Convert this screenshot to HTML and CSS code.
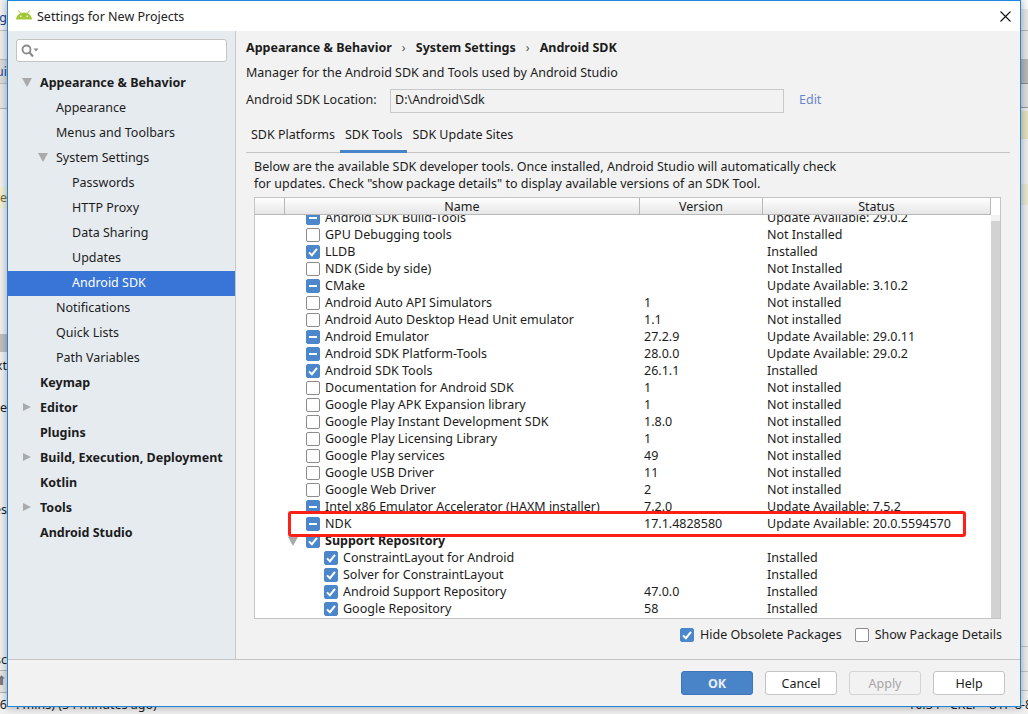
FILE: index.html
```html
<!DOCTYPE html>
<html lang="en">
<head>
    <meta charset="UTF-8">
    <title>Settings for New Projects</title>
    <link rel="stylesheet" href="styles.css">
</head>
<body>
    <svg class="defs" width="0" height="0">
        <symbol id="tick" viewBox="0 0 14 14">
            <path d="M3 7.4 5.9 10.2 11 3.8" fill="none" stroke="#fff" stroke-width="2"/>
        </symbol>
    </svg>

    <!-- scraps of the IDE behind the dialog -->
    <div class="strip strip-left">
        <span class="scrap scrap-g">g</span>
        <span class="scrap scrap-ui">ui</span>
        <span class="scrap scrap-ve">ve</span>
        <span class="scrap scrap-xt">xt</span>
        <span class="scrap scrap-le">le</span>
        <span class="scrap scrap-es">es</span>
        <span class="scrap scrap-sc">sc</span>
        <span class="scrap scrap-up">⬆</span>
        <span class="scrap scrap-6">6</span>
    </div>
    <div class="strip strip-right">
        <span class="scrap scrap-8">-8</span>
    </div>
    <div class="under-text under-left">: mins) (34 minutes ago)</div>
    <div class="under-text under-right">16:34 &nbsp; CRLF &nbsp; UTF-8</div>

    <div class="window">
        <div class="titlebar">
            <svg class="droid" width="16" height="10" viewBox="0 0 16 10">
                <path d="M0 9.5C.3 5.5 3.5 2.5 8 2.5s7.7 3 8 7z" fill="#a4c639"/>
                <path d="M2.5 .5 5 4M13.5 .5 11 4" stroke="#a4c639" stroke-width="1"/>
                <circle cx="4.8" cy="6.3" r=".8" fill="#fff"/>
                <circle cx="11.2" cy="6.3" r=".8" fill="#fff"/>
            </svg>
            <span class="title">Settings for New Projects</span>
            <svg class="close" width="11" height="11" viewBox="0 0 11 11">
                <path d="M.5 .5 10.5 10.5M10.5 .5 .5 10.5" stroke="#111" stroke-width="1.1"/>
            </svg>
        </div>

        <div class="main">
            <div class="sidebar">
                <div class="search">
                    <svg width="18" height="14" viewBox="0 0 18 14">
                        <circle cx="5.5" cy="5.5" r="4" fill="none" stroke="#8a8a8a" stroke-width="1.8"/>
                        <path d="M8.5 8.5 12 12.5" stroke="#8a8a8a" stroke-width="2.2"/>
                        <path d="M12.5 4.5h5l-2.5 3z" fill="#8a8a8a"/>
                    </svg>
                </div>
                <ul class="tree">
                    <li class="node top"><span class="tw tw-down"></span>Appearance &amp; Behavior</li>
                    <li class="node sub">Appearance</li>
                    <li class="node sub">Menus and Toolbars</li>
                    <li class="node sub-open"><span class="tw tw-down"></span>System Settings</li>
                    <li class="node leaf">Passwords</li>
                    <li class="node leaf">HTTP Proxy</li>
                    <li class="node leaf">Data Sharing</li>
                    <li class="node leaf">Updates</li>
                    <li class="node leaf selected">Android SDK</li>
                    <li class="node sub">Notifications</li>
                    <li class="node sub">Quick Lists</li>
                    <li class="node sub">Path Variables</li>
                    <li class="node top"><span class="tw"></span>Keymap</li>
                    <li class="node top"><span class="tw tw-right"></span>Editor</li>
                    <li class="node top"><span class="tw"></span>Plugins</li>
                    <li class="node top"><span class="tw tw-right"></span>Build, Execution, Deployment</li>
                    <li class="node top"><span class="tw"></span>Kotlin</li>
                    <li class="node top"><span class="tw tw-right"></span>Tools</li>
                    <li class="node top"><span class="tw"></span>Android Studio</li>
                </ul>
            </div>

            <div class="pane">
                <div class="crumbs">
                    <span>Appearance &amp; Behavior</span><i>›</i><span>System Settings</span><i>›</i><span>Android SDK</span>
                </div>
                <div class="desc">Manager for the Android SDK and Tools used by Android Studio</div>
                <div class="location">
                    <label>Android SDK Location:</label>
                    <div class="field">D:\Android\Sdk</div>
                    <a class="edit">Edit</a>
                </div>
                <div class="tabs">
                    <div class="tab">SDK Platforms</div>
                    <div class="tab active">SDK Tools</div>
                    <div class="tab">SDK Update Sites</div>
                </div>
                <p class="intro">Below are the available SDK developer tools. Once installed, Android Studio will automatically check<br>for updates. Check "show package details" to display available versions of an SDK Tool.</p>

                <div class="table">
                    <div class="thead">
                        <div class="th th-tree"></div>
                        <div class="th th-name">Name</div>
                        <div class="th th-ver">Version</div>
                        <div class="th th-status">Status</div>
                    </div>
                    <div class="tbody">
                        <div class="rows">
                            <div class="row first"><div class="name"><span class="cb part"></span>Android SDK Build-Tools</div><div class="ver"></div><div class="status">Update Available: 29.0.2</div></div>
                            <div class="row"><div class="name"><span class="cb"></span>GPU Debugging tools</div><div class="ver"></div><div class="status">Not Installed</div></div>
                            <div class="row"><div class="name"><span class="cb on"><svg><use href="#tick"/></svg></span>LLDB</div><div class="ver"></div><div class="status">Installed</div></div>
                            <div class="row"><div class="name"><span class="cb"></span>NDK (Side by side)</div><div class="ver"></div><div class="status">Not Installed</div></div>
                            <div class="row"><div class="name"><span class="cb part"></span>CMake</div><div class="ver"></div><div class="status">Update Available: 3.10.2</div></div>
                            <div class="row"><div class="name"><span class="cb"></span>Android Auto API Simulators</div><div class="ver">1</div><div class="status">Not installed</div></div>
                            <div class="row"><div class="name"><span class="cb"></span>Android Auto Desktop Head Unit emulator</div><div class="ver">1.1</div><div class="status">Not installed</div></div>
                            <div class="row"><div class="name"><span class="cb part"></span>Android Emulator</div><div class="ver">27.2.9</div><div class="status">Update Available: 29.0.11</div></div>
                            <div class="row"><div class="name"><span class="cb part"></span>Android SDK Platform-Tools</div><div class="ver">28.0.0</div><div class="status">Update Available: 29.0.2</div></div>
                            <div class="row"><div class="name"><span class="cb on"><svg><use href="#tick"/></svg></span>Android SDK Tools</div><div class="ver">26.1.1</div><div class="status">Installed</div></div>
                            <div class="row"><div class="name"><span class="cb"></span>Documentation for Android SDK</div><div class="ver">1</div><div class="status">Not installed</div></div>
                            <div class="row"><div class="name"><span class="cb"></span>Google Play APK Expansion library</div><div class="ver">1</div><div class="status">Not installed</div></div>
                            <div class="row"><div class="name"><span class="cb"></span>Google Play Instant Development SDK</div><div class="ver">1.8.0</div><div class="status">Not installed</div></div>
                            <div class="row"><div class="name"><span class="cb"></span>Google Play Licensing Library</div><div class="ver">1</div><div class="status">Not installed</div></div>
                            <div class="row"><div class="name"><span class="cb"></span>Google Play services</div><div class="ver">49</div><div class="status">Not installed</div></div>
                            <div class="row"><div class="name"><span class="cb"></span>Google USB Driver</div><div class="ver">11</div><div class="status">Not installed</div></div>
                            <div class="row"><div class="name"><span class="cb"></span>Google Web Driver</div><div class="ver">2</div><div class="status">Not installed</div></div>
                            <div class="row"><div class="name"><span class="cb part"></span>Intel x86 Emulator Accelerator (HAXM installer)</div><div class="ver">7.2.0</div><div class="status">Update Available: 7.5.2</div></div>
                            <div class="row"><div class="name"><span class="cb part"></span>NDK</div><div class="ver">17.1.4828580</div><div class="status">Update Available: 20.0.5594570</div></div>
                            <div class="row group"><div class="name"><span class="tw tw-down"></span><span class="cb on"><svg><use href="#tick"/></svg></span>Support Repository</div><div class="ver"></div><div class="status"></div></div>
                            <div class="row child"><div class="name"><span class="cb on"><svg><use href="#tick"/></svg></span>ConstraintLayout for Android</div><div class="ver"></div><div class="status">Installed</div></div>
                            <div class="row child"><div class="name"><span class="cb on"><svg><use href="#tick"/></svg></span>Solver for ConstraintLayout</div><div class="ver"></div><div class="status">Installed</div></div>
                            <div class="row child"><div class="name"><span class="cb on"><svg><use href="#tick"/></svg></span>Android Support Repository</div><div class="ver">47.0.0</div><div class="status">Installed</div></div>
                            <div class="row child"><div class="name"><span class="cb on"><svg><use href="#tick"/></svg></span>Google Repository</div><div class="ver">58</div><div class="status">Installed</div></div>
                        </div>
                        <div class="scrollbar"><div class="thumb"></div></div>
                    </div>
                    <div class="highlight"></div>
                </div>

                <div class="options">
                    <div class="option"><span class="cb on"><svg><use href="#tick"/></svg></span>Hide Obsolete Packages</div>
                    <div class="option"><span class="cb"></span>Show Package Details</div>
                </div>
            </div>
        </div>

        <div class="footer">
            <button class="btn primary">OK</button>
            <button class="btn">Cancel</button>
            <button class="btn disabled">Apply</button>
            <button class="btn">Help</button>
        </div>
    </div>
</body>
</html>
```

FILE: styles.css
```css
* {
    margin: 0;
    padding: 0;
    box-sizing: border-box;
}

body {
    width: 1028px;
    height: 714px;
    overflow: hidden;
    position: relative;
    background: #f0f0f0;
    font-family: "Noto Sans", "Open Sans", sans-serif;
    font-size: 12.5px;
    color: #1c1c1c;
}

.defs {
    position: absolute;
}

/* backdrop */
.strip {
    position: absolute;
    top: 0;
    height: 714px;
    overflow: hidden;
}

.strip-left {
    left: 0;
    width: 7px;
    background: linear-gradient(to bottom,
        #f2f2f2 0 30px, #bdbdbd 30px 31px, #ededed 31px 59px, #bdbdbd 59px 60px,
        #dcdcdc 60px 83px, #bdbdbd 83px 84px, #e6e6e6 84px 108px, #b5b5b5 108px 109px,
        #f0f0f0 109px 187px, #f3f0d8 187px 208px, #f0f0f0 208px 334px, #bfbfbf 334px 352px,
        #f0f0f0 352px 670px, #b5b5b5 670px 671px, #e6e6e6 671px 692px, #b5b5b5 692px 693px,
        #f0f0f0 693px 714px);
}

.strip-right {
    left: 1021px;
    width: 7px;
    background: linear-gradient(to bottom,
        #fafafa 0 9px, #e6e6e6 9px 30px, #b5b5b5 30px 31px, #e6e6e6 31px 59px,
        #b8b8b8 59px 83px, #8c8c8c 83px 84px, #dedede 84px 107px, #9a9a9a 107px 108px,
        #ececec 108px 111px, #e3dfc0 111px 139px, #ededed 139px 184px, #e9e6cf 184px 205px,
        #ededed 205px 646px, #c4c4c4 646px 647px, #ececec 647px 671px, #c4c4c4 671px 672px,
        #ececec 672px 690px, #c4c4c4 690px 691px, #f0f0f0 691px 714px);
}

.scrap {
    position: absolute;
    right: 0;
    line-height: 16px;
    white-space: nowrap;
}

.scrap-g { top: 10px; color: #1a3f8f; }
.scrap-ui { top: 64px; color: #2a4a9a; }
.scrap-ve { top: 190px; color: #7a6a30; }
.scrap-xt { top: 358px; }
.scrap-le { top: 400px; }
.scrap-es { top: 502px; }
.scrap-sc { top: 652px; }
.scrap-up { top: 673px; color: #777; }
.scrap-6 { top: 697px; }

.strip-right .scrap-8 {
    left: 0;
    right: auto;
    top: 697px;
}

.under-text {
    position: absolute;
    top: 697px;
    line-height: 16px;
    white-space: nowrap;
}

.under-left { left: 16px; }
.under-right { left: 908px; }

/* dialog */
.window {
    position: absolute;
    left: 7px;
    top: 0;
    width: 1014px;
    height: 707px;
    display: flex;
    flex-direction: column;
    background: #f2f2f2;
    border: 1px solid #1e86dc;
    box-shadow: 0 0 8px rgba(0, 0, 0, 0.35);
}

.titlebar {
    height: 30px;
    flex: none;
    display: flex;
    align-items: center;
    background: #fff;
    padding: 0 9px 0 8px;
}

.droid {
    margin-bottom: 3px;
}

.title {
    margin-left: 5px;
    color: #222;
}

.close {
    margin-left: auto;
}

.main {
    flex: 1;
    display: flex;
    min-height: 0;
}

/* sidebar */
.sidebar {
    width: 228px;
    flex: none;
    background: #e6ebf0;
    border-right: 1px solid #c8c8c8;
    padding-top: 8px;
}

.search {
    width: 211px;
    height: 23px;
    margin-left: 8px;
    background: #fff;
    border: 1px solid #c4c4c4;
    border-radius: 3px;
    padding: 4px 0 0 4px;
    display: flex;
}

.tree {
    list-style: none;
    margin-top: 9px;
}

.node {
    height: 25px;
    padding-bottom: 2px;
    white-space: nowrap;
    display: flex;
    align-items: center;
}

.top {
    padding-left: 14px;
    font-weight: 700;
}

.sub {
    padding-left: 48px;
}

.sub-open {
    padding-left: 30px;
}

.leaf {
    padding-left: 64px;
}

.selected {
    background: #3875d7;
    color: #fff;
}

.tw {
    display: inline-block;
    width: 18px;
    height: 9px;
    flex: none;
    position: relative;
}

.tw-down::before,
.tw-right::before {
    content: "";
    position: absolute;
    left: 0;
    top: 0;
    border-style: solid;
    border-color: transparent;
}

.tw-down::before {
    left: 0;
    border-width: 9px 5px 0 5px;
    border-top-color: #aaa;
}

.tw-right::before {
    left: 1px;
    border-width: 4.5px 0 4.5px 8px;
    border-left-color: #aaa;
}

/* right pane */
.pane {
    flex: 1;
    min-width: 0;
    padding: 4px 10px 0 10px;
}

.crumbs {
    height: 25px;
    line-height: 25px;
    font-weight: 700;
    display: flex;
}

.crumbs i {
    width: 24px;
    text-align: center;
    font-style: normal;
    font-weight: 400;
    color: #555;
}

.desc {
    height: 25px;
    line-height: 25px;
}

.location {
    display: flex;
    align-items: center;
    margin-top: 4px;
    height: 24px;
}

.location label {
    width: 144px;
    margin-bottom: 3px;
}

.field {
    width: 394px;
    height: 24px;
    line-height: 20px;
    padding-left: 4px;
    border: 1px solid #c8c8c8;
}

.edit {
    margin-left: 15px;
    margin-bottom: 3px;
    color: #6b86cf;
}

.tabs {
    display: flex;
    height: 34px;
    margin-top: 6px;
    border-bottom: 1px solid #c4c4c4;
}

.tab {
    padding: 0 5px;
    height: 34px;
    line-height: 32px;
}

.active {
    border-bottom: 3px solid #4a84c8;
}

.intro {
    margin-top: 5px;
    padding-left: 8px;
    line-height: 17px;
}

.table {
    position: relative;
    margin: 5px 9px 0 8px;
    height: 422px;
    background: #fff;
    border: 1px solid #c4c4c4;
    display: flex;
    flex-direction: column;
}

.thead {
    height: 17px;
    flex: none;
    display: flex;
    background: linear-gradient(to bottom, #fff, #e6e6e6);
    width: 736px;
    border-bottom: 1px solid #b8b8b8;
    border-right: 1px solid #b8b8b8;
}

.th {
    text-align: center;
    line-height: 18px;
    height: 16px;
    border-right: 1px solid #b8b8b8;
}

.th:last-child {
    border-right: none;
}

.th-tree { width: 30px; }
.th-name { width: 355px; }
.th-ver { width: 123px; }
.th-status { flex: 1; }

.tbody {
    flex: 1;
    display: flex;
    min-height: 0;
}

.rows {
    width: 736px;
    overflow: hidden;
}

.row {
    display: flex;
    height: 17px;
    line-height: 17px;
    white-space: nowrap;
}

.first {
    margin-top: -6px;
}

.name {
    width: 385px;
    padding-left: 51px;
    display: flex;
    align-items: center;
    position: relative;
}

.child .name {
    padding-left: 69px;
}

.group .name {
    font-weight: 700;
}

.group .tw {
    position: absolute;
    left: 33px;
    top: 5px;
}

.ver {
    width: 123px;
    padding-left: 4px;
}

.status {
    padding-left: 4px;
}

.cb {
    width: 14px;
    height: 14px;
    flex: none;
    margin-right: 5px;
    background: #fff;
    border: 1px solid #8c8c8c;
    border-radius: 2px;
    position: relative;
    display: inline-block;
}

.cb svg {
    position: absolute;
    left: -1px;
    top: -1px;
    width: 14px;
    height: 14px;
}

.on,
.part {
    background: #4d87cb;
    border-color: #4d87cb;
}

.part::after {
    content: "";
    position: absolute;
    left: 2px;
    right: 2px;
    top: 5px;
    height: 2px;
    background: #fff;
}

.scrollbar {
    flex: 1;
    background: #f2f2f2;
    padding-top: 6px;
}

.thumb {
    height: 100%;
    background: #d2d2d2;
}

.highlight {
    position: absolute;
    left: 33px;
    top: 313px;
    width: 678px;
    height: 26px;
    border: 3px solid #ff2015;
    border-radius: 3px;
}

.options {
    display: flex;
    justify-content: flex-end;
    gap: 13px;
    padding-right: 8px;
    margin-top: 7px;
}

.option {
    display: flex;
    align-items: center;
    line-height: 17px;
}

.option .cb {
    margin-right: 6px;
}

/* footer */
.footer {
    height: 47px;
    flex: none;
    border-top: 1px solid #c4c4c4;
    display: flex;
    justify-content: flex-end;
    gap: 12px;
    padding: 11px 15px 0 0;
}

.btn {
    width: 72px;
    height: 24px;
    background: #fff;
    border: 1px solid #c4c4c4;
    border-radius: 3px;
    font: inherit;
    color: inherit;
}

.primary {
    background: #4a84c8;
    border-color: #3f74b8;
    color: #e6eef8;
    font-weight: 700;
}

.disabled {
    background: #f2f2f2;
    border-color: #d4d4d4;
    color: #a6a6a6;
}
```
